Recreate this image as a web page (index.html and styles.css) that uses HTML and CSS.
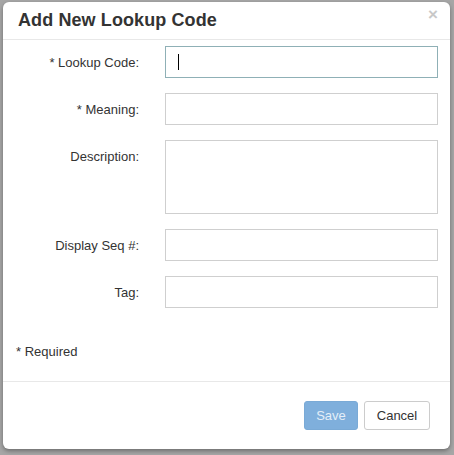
FILE: index.html
```html
<!DOCTYPE html>
<html>
<head>
<meta charset="utf-8">
<link rel="stylesheet" href="styles.css">
</head>
<body>
<div class="backdrop">
  <div class="modal">
    <div class="modal-header">
      <h4 class="title">Add New Lookup Code</h4>
      <span class="close">&times;</span>
    </div>
    <div class="modal-body">
      <div class="row">
        <label class="lbl">* Lookup Code:</label>
        <div class="field focused"><span class="caret"></span></div>
      </div>
      <div class="row">
        <label class="lbl">* Meaning:</label>
        <div class="field"></div>
      </div>
      <div class="row">
        <label class="lbl">Description:</label>
        <div class="field area"></div>
      </div>
      <div class="row">
        <label class="lbl">Display Seq #:</label>
        <div class="field"></div>
      </div>
      <div class="row">
        <label class="lbl">Tag:</label>
        <div class="field"></div>
      </div>
      <p class="required">* Required</p>
    </div>
    <div class="modal-footer">
      <button class="btn btn-save">Save</button>
      <button class="btn btn-cancel">Cancel</button>
    </div>
  </div>
</div>
</body>
</html>
```
FILE: styles.css
```css
html, body {
  margin: 0;
  padding: 0;
  background: #a6a6a6;
  font-family: "Liberation Sans", Arial, sans-serif;
  color: #333;
}
.backdrop {
  width: 454px;
  height: 455px;
  padding: 2px 4px 6px 3px;
  box-sizing: border-box;
}
.modal {
  background: #fff;
  border-radius: 6px;
  height: 447px;
  box-shadow: 0 2px 4px rgba(0,0,0,0.35);
  display: flex;
  flex-direction: column;
}
.modal-header {
  height: 37px;
  border-bottom: 1px solid #e8e8e8;
  display: flex;
  align-items: center;
  justify-content: space-between;
  padding: 0 12px 0 15px;
}
.title {
  margin: 0;
  font-size: 18px;
  font-weight: bold;
  color: #333;
  letter-spacing: 0.1px;
}
.close {
  font-size: 17px;
  font-weight: bold;
  color: #c8c8c8;
  align-self: flex-start;
  margin-top: 3px;
  line-height: 20px;
}
.modal-body {
  padding: 6px 12px 0 13px;
  flex: 1;
}
.row {
  display: flex;
  align-items: flex-start;
  margin-bottom: 15px;
}
.lbl {
  width: 123px;
  text-align: right;
  font-size: 13px;
  color: #333;
  padding-top: 9px;
  margin-right: 26px;
}
.field {
  width: 271px;
  height: 30px;
  border: 1px solid #cfcfcf;
  background: #fff;
  position: relative;
}
.field.area {
  height: 72px;
}
.field.focused {
  border-color: #8fb0b6;
}
.caret {
  position: absolute;
  left: 12px;
  top: 7px;
  width: 1px;
  height: 16px;
  background: #000;
}
.required {
  margin: 36px 0 0 0;
  font-size: 13px;
  color: #333;
}
.modal-footer {
  border-top: 1px solid #e8e8e8;
  height: 67px;
  display: flex;
  justify-content: flex-end;
  align-items: center;
  padding: 0 20px 0 0;
  gap: 6px;
}
.btn {
  font-family: "Liberation Sans", Arial, sans-serif;
  font-size: 13px;
  height: 29px;
  border-radius: 3px;
  padding: 0;
  margin-top: 0;
}
.btn-save {
  width: 54px;
  background: #7fafdc;
  border: 1px solid #7aaad6;
  color: #e4eef8;
}
.btn-cancel {
  width: 66px;
  background: #fff;
  border: 1px solid #cccccc;
  color: #333;
}
```
